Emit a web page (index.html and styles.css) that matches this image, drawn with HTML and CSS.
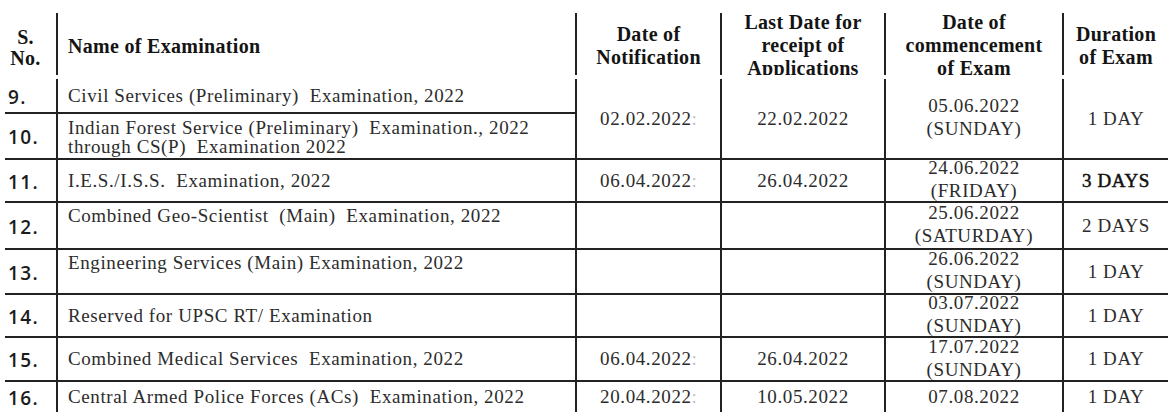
FILE: index.html
```html
<!DOCTYPE html>
<html lang="en">
<head>
<meta charset="utf-8">
<title>Examination Schedule 2022</title>
<link rel="stylesheet" href="styles.css">
</head>
<body>
<div class="sheet" role="table">
  <div class="head" role="row">
    <div class="hc sno" role="columnheader"><div class="ht tight">S.<br>No.</div></div>
    <div class="hc name" role="columnheader"><div class="ht">Name of Examination</div></div>
    <div class="hc ctr" role="columnheader"><div class="ht">Date of<br>Notification</div></div>
    <div class="hc ctr tall" role="columnheader"><div class="ht">Last Date for<br>receipt of<br>Applications</div></div>
    <div class="hc ctr tall" role="columnheader"><div class="ht">Date of<br>commencement<br>of Exam</div></div>
    <div class="hc ctr lastc" role="columnheader"><div class="ht">Duration<br>of Exam</div></div>
  </div>

  <div class="body" role="rowgroup">
    <!-- 9 -->
    <div class="c num">9.</div>
    <div class="c name">Civil Services (Preliminary)  Examination, 2022</div>
    <div class="c ctr span2">02.02.2022<span class="ghost">:</span></div>
    <div class="c ctr span2">22.02.2022</div>
    <div class="c ctr two span2">05.06.2022<br>(SUNDAY)</div>
    <div class="c ctr lastc span2">1 DAY</div>
    <!-- 10 -->
    <div class="c num">10.</div>
    <div class="c name multi">Indian Forest Service (Preliminary)  Examination., 2022<br>through CS(P)  Examination 2022</div>
    <!-- 11 -->
    <div class="c num">11.</div>
    <div class="c name">I.E.S./I.S.S.  Examination, 2022</div>
    <div class="c ctr">06.04.2022<span class="ghost">:</span></div>
    <div class="c ctr">26.04.2022</div>
    <div class="c ctr two">24.06.2022<br>(FRIDAY)</div>
    <div class="c ctr lastc dark">3 DAYS</div>
    <!-- 12 -->
    <div class="c num">12.</div>
    <div class="c name top">Combined Geo-Scientist  (Main)  Examination, 2022</div>
    <div class="c"></div>
    <div class="c"></div>
    <div class="c ctr two">25.06.2022<br>(SATURDAY)</div>
    <div class="c ctr lastc">2 DAYS</div>
    <!-- 13 -->
    <div class="c num">13.</div>
    <div class="c name top">Engineering Services (Main) Examination, 2022</div>
    <div class="c"></div>
    <div class="c"></div>
    <div class="c ctr two">26.06.2022<br>(SUNDAY)</div>
    <div class="c ctr lastc">1 DAY</div>
    <!-- 14 -->
    <div class="c num">14.</div>
    <div class="c name">Reserved for UPSC RT/ Examination</div>
    <div class="c"></div>
    <div class="c"></div>
    <div class="c ctr two">03.07.2022<br>(SUNDAY)</div>
    <div class="c ctr lastc">1 DAY</div>
    <!-- 15 -->
    <div class="c num">15.</div>
    <div class="c name">Combined Medical Services  Examination, 2022</div>
    <div class="c ctr">06.04.2022<span class="ghost">:</span></div>
    <div class="c ctr">26.04.2022</div>
    <div class="c ctr two">17.07.2022<br>(SUNDAY)</div>
    <div class="c ctr lastc">1 DAY</div>
    <!-- 16 -->
    <div class="c num nb">16.</div>
    <div class="c name nb">Central Armed Police Forces (ACs)  Examination, 2022</div>
    <div class="c ctr nb">20.04.2022<span class="ghost">:</span></div>
    <div class="c ctr nb">10.05.2022</div>
    <div class="c ctr nb">07.08.2022</div>
    <div class="c ctr lastc nb">1 DAY</div>
  </div>
</div>
</body>
</html>
```

FILE: styles.css
```css
* { box-sizing: border-box; }

html, body {
  margin: 0;
  padding: 0;
  background: #ffffff;
}

.sheet {
  margin: 13px 0 0 5px;
  width: 1163px;
  font-family: "Liberation Serif", "Times New Roman", serif;
  color: #2c2c2c;
}

.head,
.body {
  display: grid;
  grid-template-columns: 53px 519px 145px 164px 178px 104px;
}

.head {
  height: 62px;
  margin-bottom: 4px;
}

.hc {
  height: 62px;
  border-right: 2px solid #222;
  display: flex;
  flex-direction: column;
  justify-content: center;
  padding-top: 4px;
  font-weight: bold;
  font-size: 20px;
  line-height: 23px;
  letter-spacing: 0.3px;
  color: #141414;
}

.hc.tall {
  padding-top: 2px;
  padding-bottom: 0;
  clip-path: inset(-20px -4px 0 -4px);
}

.hc.sno {
  text-align: center;
  padding-right: 10px;
  padding-top: 8px;
}

.hc.sno .ht.tight {
  line-height: 21px;
}

.hc.name {
  padding-left: 10px;
}

.hc.ctr {
  text-align: center;
}

.hc.lastc {
  border-right: none;
}

.body {
  grid-template-rows: 35px 46px 43px 47px 45px 43px 44px 30px;
}

.c {
  border-right: 2px solid #222;
  border-bottom: 2px solid #222;
  display: flex;
  align-items: center;
  font-size: 19px;
  line-height: 20px;
  letter-spacing: 0.6px;
}

.c.span2 {
  grid-row: span 2;
}

.c.lastc {
  border-right: none;
}

.c.nb {
  border-bottom: none;
}

.c.num {
  font-family: "Open Sans", "DejaVu Sans", sans-serif;
  font-weight: 600;
  font-size: 19px;
  letter-spacing: 1.4px;
  color: #1c1c1c;
  padding-left: 3px;
  padding-top: 2px;
}

.c.name {
  padding-left: 10px;
  white-space: pre;
}

.c.name.multi {
  line-height: 19px;
  padding-top: 2px;
}

.c.name.top {
  align-items: flex-start;
  padding-top: 3px;
}

.c.ctr {
  justify-content: center;
  text-align: center;
}

.c.two {
  line-height: 23px;
  padding-bottom: 3px;
}

.c.dark {
  color: #111;
  -webkit-text-stroke: 0.5px #111;
}

.ghost {
  color: #c4c4c4;
  letter-spacing: 0;
}
```
